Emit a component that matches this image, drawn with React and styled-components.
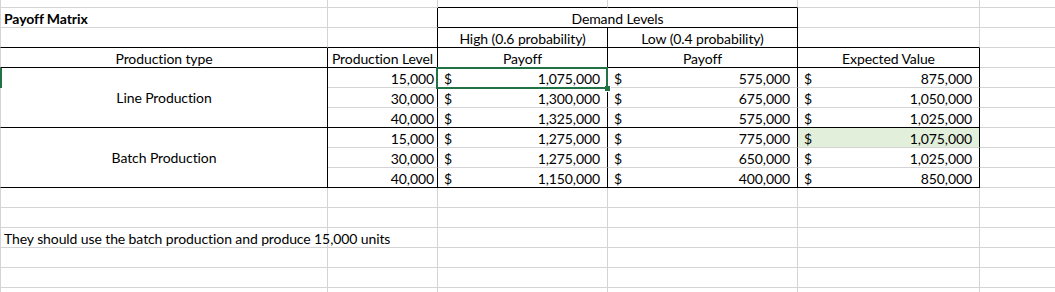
import React from 'react';
import styled, { createGlobalStyle } from 'styled-components';

const GRID = '#d4d4d4';
const EXCEL_GREEN = '#217346';

const GlobalStyle = createGlobalStyle`
    html, body {
        margin: 0;
        padding: 0;
        background: #fff;
    }
`;

const lines = [
    { level: '15,000', high: '1,075,000', low: '575,000', ev: '875,000' },
    { level: '30,000', high: '1,300,000', low: '675,000', ev: '1,050,000' },
    { level: '40,000', high: '1,325,000', low: '575,000', ev: '1,025,000' },
];

const batches = [
    { level: '15,000', high: '1,275,000', low: '775,000', ev: '1,075,000', best: true },
    { level: '30,000', high: '1,275,000', low: '650,000', ev: '1,025,000' },
    { level: '40,000', high: '1,150,000', low: '400,000', ev: '850,000' },
];

const App = () => {
    return (
        <>
            <GlobalStyle />
            <Sheet>
                {/* row 0 - partly scrolled off */}
                <Cell $first />
                <Cell />
                <Cell $bb />
                <Cell $bb />
                <Cell />
                <Cell $last />

                {/* title + demand levels */}
                <Cell $first $bold>Payoff Matrix</Cell>
                <Cell $br />
                <Cell $span={2} $align="center" $br $bb>Demand Levels</Cell>
                <Cell />
                <Cell $last />

                <Cell $first $bb />
                <Cell $br $bb />
                <Cell $align="center" $br $bb>High (0.6 probability)</Cell>
                <Cell $align="center" $br $bb>Low (0.4 probability)</Cell>
                <Cell $bb />
                <Cell $last />

                {/* headers */}
                <Cell $first $align="center" $br $bb>Production type</Cell>
                <Cell $align="center" $br $bb>Production Level</Cell>
                <Cell $align="center" $br $bb>Payoff</Cell>
                <Cell $align="center" $br $bb>Payoff</Cell>
                <Cell $align="center" $br $bb>Expected Value</Cell>
                <Cell $last />

                <Group $marked>Line Production</Group>
                {lines.map((r, i) => (
                    <React.Fragment key={'l' + i}>
                        <Level $bb={i === 2}>{r.level}</Level>
                        <Money $bb={i === 2} $selected={i === 0}><span>$</span><span>{r.high}</span></Money>
                        <Money $bb={i === 2}><span>$</span><span>{r.low}</span></Money>
                        <Money $bb={i === 2}><span>$</span><span>{r.ev}</span></Money>
                        <Cell $last />
                    </React.Fragment>
                ))}

                <Group>Batch Production</Group>
                {batches.map((r, i) => (
                    <React.Fragment key={'b' + i}>
                        <Level $bb={i === 2}>{r.level}</Level>
                        <Money $bb={i === 2}><span>$</span><span>{r.high}</span></Money>
                        <Money $bb={i === 2}><span>$</span><span>{r.low}</span></Money>
                        <Money $bb={i === 2} $bg={r.best ? '#e2efda' : null}><span>$</span><span>{r.ev}</span></Money>
                        <Cell $last />
                    </React.Fragment>
                ))}

                {/* empty rows below + the conclusion */}
                {[0, 1, 2, 3, 4, 5].map((n) => (
                    <React.Fragment key={'e' + n}>
                        <Cell $first $overflow={n === 2}>
                            {n === 2 ? 'They should use the batch production and produce 15,000 units' : ''}
                        </Cell>
                        <Cell />
                        <Cell />
                        <Cell />
                        <Cell />
                        <Cell $last />
                    </React.Fragment>
                ))}
            </Sheet>
        </>
    );
};

export default App;

const Sheet = styled.div`
    display: grid;
    grid-template-columns: 328px 110px 170px 190px 182px 1fr;
    grid-template-rows: 8px repeat(15, 20px);
    height: 292px;
    overflow: hidden;
    font-family: Lato, "Liberation Sans", sans-serif;
    font-size: 14px;
    letter-spacing: -0.1px;
    color: #000;
    background: #fff;
`;

const Cell = styled.div`
    box-sizing: border-box;
    position: relative;
    display: flex;
    align-items: flex-end;
    justify-content: ${p => p.$align === 'center' ? 'center' : p.$align === 'right' ? 'flex-end' : 'flex-start'};
    grid-column: span ${p => p.$span || 1};
    padding: 0 3px 0 3px;
    line-height: 17px;
    white-space: nowrap;
    overflow: ${p => p.$overflow ? 'visible' : 'hidden'};
    z-index: ${p => p.$overflow ? 2 : 'auto'};
    font-weight: ${p => p.$bold ? 700 : 400};
    background: ${p => p.$bg || 'transparent'};
    border-left: ${p => p.$first ? `1px solid ${GRID}` : 'none'};
    border-right: ${p => p.$last ? 'none' : `1px solid ${p.$br ? '#000' : GRID}`};
    border-bottom: 1px solid ${p => p.$bb ? '#000' : GRID};
`;

const Group = styled(Cell).attrs({ $first: true, $br: true, $bb: true, $align: 'center' })`
    grid-row: span 3;
    align-items: center;
    overflow: visible;
    &::before {
        content: '';
        display: ${p => p.$marked ? 'block' : 'none'};
        position: absolute;
        left: -1px;
        top: 0;
        width: 2px;
        height: 20px;
        background: ${EXCEL_GREEN};
    }
`;

const Level = styled(Cell).attrs({ $br: true, $align: 'right' })``;

const Money = styled(Cell).attrs({ $br: true })`
    justify-content: space-between;
    padding: 0 7px 0 6px;
    overflow: visible;
    z-index: ${p => p.$selected ? 3 : 'auto'};
    &::after {
        content: '';
        display: ${p => p.$selected ? 'block' : 'none'};
        position: absolute;
        left: -2px;
        top: -1px;
        right: -1px;
        bottom: -2px;
        border: 2px solid ${EXCEL_GREEN};
        pointer-events: none;
    }
    &::before {
        content: '';
        display: ${p => p.$selected ? 'block' : 'none'};
        position: absolute;
        right: -4px;
        bottom: -5px;
        width: 5px;
        height: 5px;
        background: ${EXCEL_GREEN};
        border: 1px solid #fff;
    }
`;
